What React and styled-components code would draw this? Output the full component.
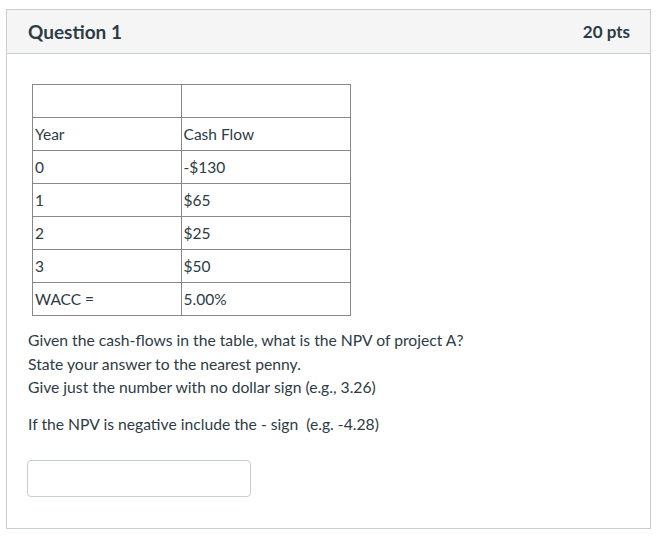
import React from "react";
import styled, { createGlobalStyle } from "styled-components";

const Global = createGlobalStyle`
  html, body { margin: 0; padding: 0; background: #fff; }
  body { font-family: Lato, "Open Sans", sans-serif; color: #2d3b45; }
`;

const Page = styled.div`
  padding: 9px 10px 8px 6px;
`;

const Card = styled.section`
  width: 643px;
  height: 518px;
  border: 1px solid #c7cdd1;
  display: flex;
  flex-direction: column;
`;

const Header = styled.header`
  height: 43px;
  background: #f5f5f5;
  border-bottom: 1px solid #c7cdd1;
  display: flex;
  align-items: center;
  justify-content: space-between;
  padding: 0 20px 0 21px;
`;

const Title = styled.h2`
  margin: 0;
  font-size: 19px;
  font-weight: 700;
  color: #2d3b45;
`;

const Points = styled.span`
  font-size: 17px;
  font-weight: 700;
  color: #2d3b45;
`;

const Body = styled.div`
  padding: 30px 21px 0 21px;
  font-size: 15.7px;
`;

const Table = styled.table`
  margin-left: 4px;
  border-collapse: collapse;
  width: 319px;
  border: 1px solid #222;
`;

const Cell = styled.td`
  border: 1px solid #888;
  height: 32px;
  padding: 0 2px;
  width: ${(p) => p.$w}px;
  font-size: 15.5px;
  color: #2d3b45;
  vertical-align: middle;
`;

const Text = styled.p`
  margin: ${(p) => p.$mt}px 0 0 0;
  line-height: 23.5px;
  font-size: 15.7px;
`;

const Answer = styled.input`
  display: block;
  margin: 24px 0 0 -1px;
  width: 224px;
  height: 37px;
  box-sizing: border-box;
  border: 1px solid #c7cdd1;
  border-radius: 4px;
  background: #fff;
`;

const rows = [
  ["", ""],
  ["Year", "Cash Flow"],
  ["0", "-$130"],
  ["1", "$65"],
  ["2", "$25"],
  ["3", "$50"],
  ["WACC =", "5.00%"],
];

export default function App() {
  return (
    <Page>
      <Global />
      <Card>
        <Header>
          <Title>Question 1</Title>
          <Points>20 pts</Points>
        </Header>
        <Body>
          <Table>
            <tbody>
              {rows.map((r, i) => (
                <tr key={i}>
                  <Cell $w={148}>{r[0]}</Cell>
                  <Cell $w={170}>{r[1]}</Cell>
                </tr>
              ))}
            </tbody>
          </Table>
          <Text $mt={13}>
            Given the cash-flows in the table, what is the NPV of project A?
            <br />
            State your answer to the nearest penny.
            <br />
            Give just the number with no dollar sign (e.g., 3.26)
          </Text>
          <Text $mt={13}>If the NPV is negative include the - sign&nbsp; (e.g. -4.28)</Text>
          <Answer type="text" />
        </Body>
      </Card>
    </Page>
  );
}
